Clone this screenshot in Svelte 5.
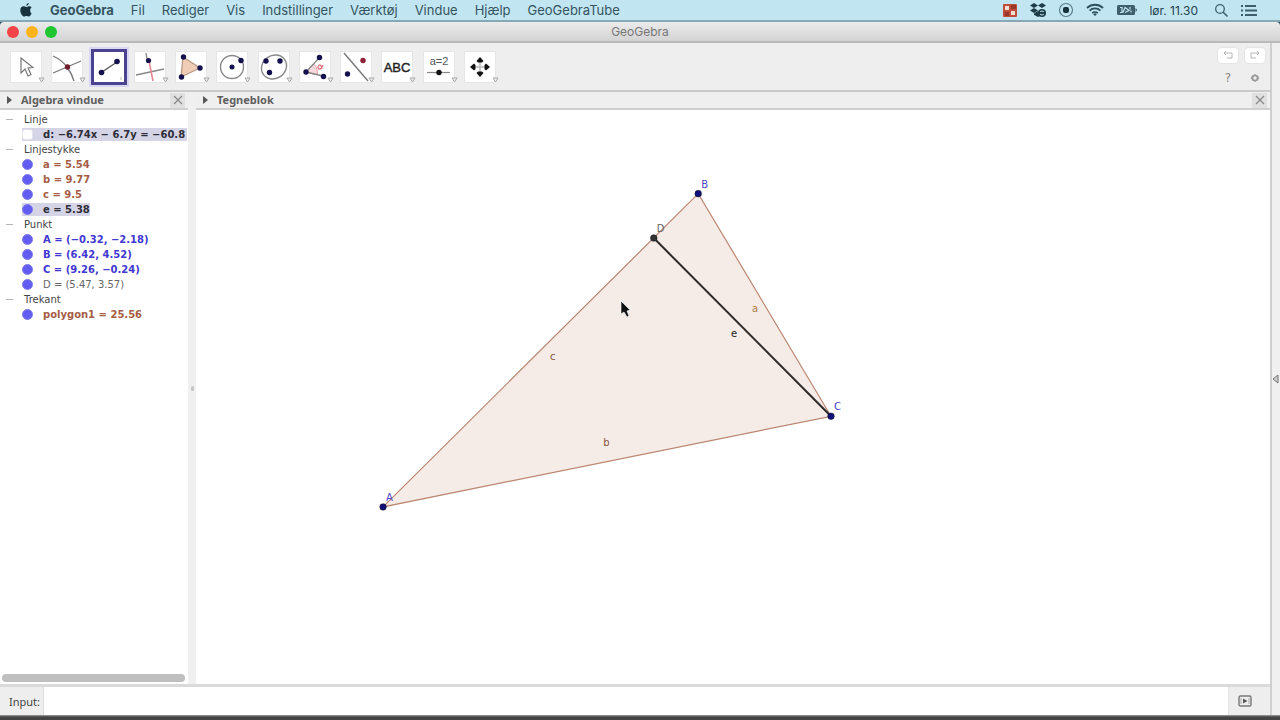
<script lang="ts">
  type Point = { name: string; x: number; y: number; color: string; fill: string };

  const menus = ['Fil', 'Rediger', 'Vis', 'Indstillinger', 'Værktøj', 'Vindue', 'Hjælp', 'GeoGebraTube'];

  const tools = [
    { id: 'move', label: 'Flyt' },
    { id: 'intersect', label: 'Skæringspunkt' },
    { id: 'segment', label: 'Linjestykke' },
    { id: 'perpendicular', label: 'Vinkelret linje' },
    { id: 'polygon', label: 'Polygon' },
    { id: 'circle', label: 'Cirkel' },
    { id: 'ellipse', label: 'Ellipse' },
    { id: 'angle', label: 'Vinkel' },
    { id: 'reflect', label: 'Spejling' },
    { id: 'text', label: 'Tekst' },
    { id: 'slider', label: 'Skyder' },
    { id: 'pan', label: 'Flyt tegneblok' }
  ];
  let activeTool = $state('segment');

  let groups = $state([
    {
      name: 'Linje',
      open: true,
      items: [{ text: 'd: −6.74x − 6.7y = −60.8', kind: 'plain', bold: true, selected: true, wide: true, shown: false }]
    },
    {
      name: 'Linjestykke',
      open: true,
      items: [
        { text: 'a = 5.54', kind: 'brown', bold: true, selected: false, wide: false, shown: true },
        { text: 'b = 9.77', kind: 'brown', bold: true, selected: false, wide: false, shown: true },
        { text: 'c = 9.5', kind: 'brown', bold: true, selected: false, wide: false, shown: true },
        { text: 'e = 5.38', kind: 'plain', bold: true, selected: true, wide: false, shown: true }
      ]
    },
    {
      name: 'Punkt',
      open: true,
      items: [
        { text: 'A = (−0.32, −2.18)', kind: 'blue', bold: true, selected: false, wide: false, shown: true },
        { text: 'B = (6.42, 4.52)', kind: 'blue', bold: true, selected: false, wide: false, shown: true },
        { text: 'C = (9.26, −0.24)', kind: 'blue', bold: true, selected: false, wide: false, shown: true },
        { text: 'D = (5.47, 3.57)', kind: 'grey', bold: false, selected: false, wide: false, shown: true }
      ]
    },
    {
      name: 'Trekant',
      open: true,
      items: [{ text: 'polygon1 = 25.56', kind: 'brown', bold: true, selected: false, wide: false, shown: true }]
    }
  ]);

  // View transform: pixels per unit and the origin inside the drawing pad
  const scale = 46.76;
  const origin = { x: 202, y: 295 };
  const px = (x: number) => origin.x + x * scale;
  const py = (y: number) => origin.y - y * scale;

  const A: Point = { name: 'A', x: -0.32, y: -2.18, color: '#4a46cc', fill: '#10107c' };
  const B: Point = { name: 'B', x: 6.42, y: 4.52, color: '#4a46cc', fill: '#10107c' };
  const C: Point = { name: 'C', x: 9.26, y: -0.24, color: '#4a46cc', fill: '#10107c' };
  const D: Point = { name: 'D', x: 5.47, y: 3.57, color: '#666', fill: '#333' };
  const points = [A, B, C, D];

  const edgeLabels = [
    { name: 'a', x: 7.57, y: 1.98, color: '#b07b48' },
    { name: 'b', x: 4.39, y: -0.88, color: '#84563f' },
    { name: 'c', x: 3.25, y: 0.96, color: '#84563f' },
    { name: 'e', x: 7.12, y: 1.46, color: '#222' }
  ];

  const triangle = [A, B, C].map((p) => `${px(p.x)},${py(p.y)}`).join(' ');

  let command = $state('');
</script>

<div class="screen">
  <nav class="menubar" aria-label="Menu">
    <button class="apple" aria-label="Apple">
      <svg width="14" height="16" viewBox="0 0 14 16">
        <path d="M9.8 1c.1 1.3-1 2.7-2.500 2.700C7.100 2.400 8.400 1.100 9.800 1zM12.600 11.300c-.7 1.700-1.600 3.200-2.800 3.200-.9 0-1.200-.5-2.300-.5s-1.500.5-2.300.5C3.300 14.500 1.300 11.200 1.300 8.200c0-2.500 1.600-3.900 3.200-3.900 1.100 0 1.900.7 2.800.7.800 0 1.700-.8 3.100-.8.900 0 1.700.5 2.200 1.200-2 1.200-1.700 4.800 0 5.900z" fill="#17323c" />
      </svg>
    </button>
    <button class="app-name">GeoGebra</button>
    {#each menus as menu}
      <button>{menu}</button>
    {/each}

    <div class="status">
      <svg width="16" height="16" viewBox="0 0 16 16">
        <rect x="1" y="2" width="14" height="13" rx="1" fill="#c04d37" />
        <path d="M3 4h4v4H3zM9 9h4v4H9z" fill="#f6ddd6" />
        <path d="M9 3h5v4H9zM3 10h4v4H3z" fill="#96382a" />
      </svg>
      <svg width="18" height="16" viewBox="0 0 18 16">
        <path d="M5 1l4 2.500-4 2.500-4-2.500zM13 1l4 2.500-4 2.500-4-2.500zM5 6l4 2.500L5 11 1 8.500zM5 11.500l4-2.500 2 1v4l-2 1-4-2.200z" fill="#1d3c47" />
        <circle cx="13" cy="11" r="4" fill="#1d3c47" />
        <path d="M11 10a2.500 2.500 0 0 1 4 0M15 12a2.500 2.500 0 0 1-4 0" stroke="#c1e6f2" fill="none" />
      </svg>
      <svg width="16" height="16" viewBox="0 0 16 16">
        <circle cx="8" cy="8" r="6.500" fill="none" stroke="#5b7c88" stroke-width="1.200" />
        <rect x="5" y="5" width="6" height="6" rx="2" fill="#17323c" />
      </svg>
      <svg width="20" height="16" viewBox="0 0 20 16">
        <path d="M2 6a11.500 11.500 0 0 1 16 0M4.600 8.600a7.800 7.800 0 0 1 10.800 0M7.200 11.200a4 4 0 0 1 5.600 0" fill="none" stroke="#2e4f5b" stroke-width="1.800" />
        <path d="M8.200 12.200a2.500 2.500 0 0 1 3.600 0L10 14z" fill="#2e4f5b" />
      </svg>
      <svg width="22" height="16" viewBox="0 0 22 16">
        <rect x="1" y="3" width="18" height="10" rx="1.500" fill="#3d5e6a" />
        <path d="M19.500 6q3 2 0 4z" fill="#3d5e6a" />
        <path d="M4 5.500h2v5H4M7 10.500l2-5 4 3-4 2M14 5v2.500M15 8.500v2" stroke="#c1e6f2" fill="none" stroke-width="1.200" />
      </svg>
      <span class="clock">lør. 11.30</span>
      <button aria-label="Søg">
        <svg width="16" height="16" viewBox="0 0 16 16">
          <circle cx="7" cy="7" r="4.300" fill="none" stroke="#3d5e6a" stroke-width="1.300" />
          <path d="M10.200 10.200L14.500 14.500" stroke="#3d5e6a" stroke-width="1.600" />
        </svg>
      </button>
      <button aria-label="Notifikationer">
        <svg width="18" height="16" viewBox="0 0 18 16">
          <path d="M1 4h2M1 8.500h2M1 13h2M5 4h11M5 8.500h12M5 13h12" stroke="#3d5e6a" stroke-width="1.800" />
        </svg>
      </button>
    </div>
  </nav>

  <div class="title-back">
    <header class="titlebar">
      <div class="lights">
        <button class="light red" aria-label="Luk"></button>
        <button class="light yellow" aria-label="Minimer"></button>
        <button class="light green" aria-label="Zoom"></button>
      </div>
      <h1>GeoGebra</h1>
    </header>
  </div>

  <div class="window">
    <div class="main">
      <div class="toolbar">
        <div class="tools">
          {#each tools as tool}
            <button
              class="tool"
              class:active={activeTool === tool.id}
              aria-label={tool.label}
              onclick={() => (activeTool = tool.id)}
            >
              <svg width="30" height="30" viewBox="0 0 30 30">
                {#if tool.id === 'move'}
                  <path d="M10 6v15l4-4 3 7 3-1.500-3-6.500 5-.5z" fill="#fff" stroke="#777" stroke-width="1.200" />
                {:else if tool.id === 'intersect'}
                  <path d="M1 4q9 4 14 11t7 14M1 21L29 9" stroke="#777" stroke-width="1.300" fill="none" />
                  <circle cx="15.500" cy="15" r="2.700" fill="#701c2a" />
                {:else if tool.id === 'segment'}
                  <path d="M8 20L23 10" stroke="#555" stroke-width="1.300" />
                  <circle cx="7.500" cy="20.500" r="2.800" fill="#15104e" />
                  <circle cx="23" cy="9.500" r="2.800" fill="#15104e" />
                  <path d="M27 25v3" stroke="#bbb" />
                {:else if tool.id === 'perpendicular'}
                  <path d="M1 23L29 17" stroke="#888" stroke-width="1.300" />
                  <path d="M11 1l1 6" stroke="#888" stroke-width="1.300" />
                  <path d="M14 9l4 20" stroke="#e48795" stroke-width="1.600" />
                  <circle cx="13.500" cy="8.500" r="2.600" fill="#15104e" />
                {:else if tool.id === 'polygon'}
                  <path d="M7 5l17 11L5 25z" fill="#f0cdb6" stroke="#b99a86" stroke-width="1.300" />
                  <circle cx="7.500" cy="5" r="2.700" fill="#15104e" />
                  <circle cx="24" cy="16" r="2.700" fill="#15104e" />
                  <circle cx="5.500" cy="25" r="2.700" fill="#15104e" />
                {:else if tool.id === 'circle'}
                  <circle cx="15" cy="15" r="11.500" fill="none" stroke="#888" stroke-width="1.400" />
                  <circle cx="15" cy="15" r="2.500" fill="#15104e" />
                  <circle cx="24" cy="8.500" r="2.700" fill="#15104e" />
                {:else if tool.id === 'ellipse'}
                  <ellipse cx="15" cy="15" rx="13" ry="11.500" transform="rotate(-35 15 15)" fill="none" stroke="#888" stroke-width="1.400" />
                  <circle cx="7" cy="9" r="2.700" fill="#15104e" />
                  <circle cx="21" cy="9" r="2.700" fill="#15104e" />
                  <circle cx="10.500" cy="20.500" r="2.700" fill="#15104e" />
                {:else if tool.id === 'angle'}
                  <path d="M6 20l7.500-8a11 11 0 0 1 3.500 11z" fill="#fbdadd" stroke="#e79aa3" />
                  <path d="M6 20L20 5M6 20l19 4.500" stroke="#888" stroke-width="1.300" />
                  <path d="M23 13q-2 5-4 4t0-4q2-1 3 4" stroke="#e0747e" stroke-width="1.300" fill="none" />
                  <circle cx="6" cy="20" r="2.700" fill="#15104e" />
                  <circle cx="19.500" cy="5.500" r="2.700" fill="#15104e" />
                  <circle cx="23.500" cy="24.500" r="2.700" fill="#15104e" />
                {:else if tool.id === 'reflect'}
                  <path d="M3 1l24 28" stroke="#777" stroke-width="1.400" />
                  <circle cx="22" cy="8.500" r="2.700" fill="#8f1f35" />
                  <circle cx="6.500" cy="22" r="2.700" fill="#15104e" />
                {:else if tool.id === 'text'}
                  <text x="15" y="20" text-anchor="middle" font-size="13" fill="#222" stroke="#222" stroke-width="0.400">ABC</text>
                {:else if tool.id === 'slider'}
                  <text x="15" y="13" text-anchor="middle" font-size="11" fill="#555">a=2</text>
                  <path d="M3 20.500h23" stroke="#888" stroke-width="1.200" />
                  <circle cx="15" cy="20.500" r="2.700" fill="#111" />
                {:else}
                  <path d="M15 9v12M9 15h12" stroke="#bbb" stroke-width="1.500" />
                  <path d="M15 5l3.500 4-1.500 1.500h-4L11.500 9zM15 25l3.500-4-1.500-1.500h-4L11.500 21zM5 15l4-3.500 1.500 1.500v4L9 18.500zM25 15l-4-3.500-1.500 1.500v4l1.500 1.500z" fill="#111" />
                {/if}
              </svg>
              {#if tool.id !== activeTool}
                <svg class="more" width="7" height="6" viewBox="0 0 7 6">
                  <path d="M1 1h5L3.500 5z" fill="#eee" stroke="#a8a8a8" />
                </svg>
              {/if}
            </button>
          {/each}
        </div>

        <div class="quick">
          <button class="pill" aria-label="Fortryd">
            <svg width="12" height="10" viewBox="0 0 12 10">
              <path d="M4 1L2 3l2 2M2 3h8v5H5" fill="none" stroke="#b5b5b5" />
            </svg>
          </button>
          <button class="pill" aria-label="Gentag">
            <svg width="12" height="10" viewBox="0 0 12 10">
              <path d="M8 1l2 2-2 2M10 3H2v5h5" fill="none" stroke="#b5b5b5" />
            </svg>
          </button>
          <button class="help">?</button>
          <button class="help" aria-label="Indstillinger">
            <svg width="12" height="12" viewBox="0 0 12 12">
              <path d="M6 2l1.500 1 1.500.5.500 1.500 1 1-1 1-.5 1.500L7.500 9 6 10 4.500 9 3 8.500 2.500 7l-1-1 1-1L3 3.500 4.500 3z" fill="#999" />
              <circle cx="6" cy="6" r="1.700" fill="#eee" />
            </svg>
          </button>
        </div>
      </div>

      <div class="views">
        <section class="algebra">
          <div class="view-header">
            <button class="expand" aria-label="Vis stilbjælke"><svg width="5" height="8" viewBox="0 0 5 8"><path d="M0 0l5 4-5 4z" fill="#555" /></svg></button>
            <h2>Algebra vindue</h2>
            <button class="close" aria-label="Luk algebra vindue"><svg width="10" height="10" viewBox="0 0 10 10"><path d="M1 1l8 8M9 1L1 9" stroke="#888" stroke-width="1.200" /></svg></button>
          </div>
          <div class="tree">
            {#each groups as group}
              <div class="group">
                <button class="fold" aria-label="Fold {group.name}" onclick={() => (group.open = !group.open)}></button>
                <span>{group.name}</span>
              </div>
              {#if group.open}
                {#each group.items as item}
                  <div class="item {item.kind}" class:bold={item.bold} class:selected={item.selected} class:wide={item.wide}>
                    <input type="checkbox" bind:checked={item.shown} aria-label="Vis {item.text}" />
                    <span>{item.text}</span>
                  </div>
                {/each}
              {/if}
            {/each}
          </div>
          <div class="scrollbar"></div>
        </section>

        <div class="divider"><span></span></div>

        <section class="pad">
          <div class="view-header">
            <button class="expand" aria-label="Vis stilbjælke"><svg width="5" height="8" viewBox="0 0 5 8"><path d="M0 0l5 4-5 4z" fill="#555" /></svg></button>
            <h2>Tegneblok</h2>
            <button class="close" aria-label="Luk tegneblok"><svg width="10" height="10" viewBox="0 0 10 10"><path d="M1 1l8 8M9 1L1 9" stroke="#888" stroke-width="1.200" /></svg></button>
          </div>
          <svg class="canvas">
            <polygon points={triangle} fill="#f5ebe7" stroke="#bb8670" stroke-width="1.200" />
            <line x1={px(D.x)} y1={py(D.y)} x2={px(C.x)} y2={py(C.y)} stroke="#2d2927" stroke-width="2" />
            {#each edgeLabels as label}
              <text x={px(label.x)} y={py(label.y)} fill={label.color}>{label.name}</text>
            {/each}
            {#each points as point}
              <circle cx={px(point.x)} cy={py(point.y)} r="3.300" fill={point.fill} stroke="#111" stroke-width="0.500" />
              <text x={px(point.x) + 3} y={py(point.y) - 6} fill={point.color}>{point.name}</text>
            {/each}
            <!-- mouse pointer -->
            <path d="M425 191v13l3-2 3 5 2-1-2-5 3-1z" fill="#111" stroke="#fff" stroke-width="0.600" />
          </svg>
        </section>
      </div>

      <form class="input-bar" onsubmit={(e) => e.preventDefault()}>
        <label for="command">Input:</label>
        <input id="command" type="text" autocomplete="off" bind:value={command} />
        <button aria-label="Hjælp til input">
          <svg width="14" height="12" viewBox="0 0 14 12">
            <rect x="1" y="1" width="12" height="10" rx="1.500" fill="#eee" stroke="#777" stroke-width="1.400" />
            <path d="M5 3.500v5L9.500 6z" fill="#555" />
            <path d="M3 3v6M11 3v6" stroke="#aaa" />
          </svg>
        </button>
      </form>
    </div>

    <aside class="side">
      <button aria-label="Vis sidepanel">
        <svg width="8" height="10" viewBox="0 0 8 10"><path d="M6 1v8L1 5z" fill="#ccc" stroke="#777" /></svg>
      </button>
    </aside>
  </div>
  <div class="desktop"></div>
</div>

<style>
  :global(body) {
    margin: 0;
  }

  .screen {
    min-height: 100vh;
    display: flex;
    flex-direction: column;
    background: #eee;
    font-family: 'DejaVu Sans', Verdana, sans-serif;
    font-size: 10px;
    color: #333;
  }

  button {
    margin: 0;
    padding: 0;
    border: none;
    background: none;
    font: inherit;
    color: inherit;
  }

  svg {
    display: block;
  }

  h1,
  h2 {
    margin: 0;
  }

  /* macOS menu bar */
  .menubar {
    display: flex;
    align-items: center;
    gap: 17px;
    height: 20px;
    padding: 0 22px 0 19px;
    background: #c1e6f2;
    border-bottom: 2px solid #86a9b5;
    font-family: Inter, Roboto, sans-serif;
    font-size: 13px;
    color: #36545f;
  }

  .app-name {
    font-weight: 700;
  }

  .status {
    display: flex;
    align-items: center;
    gap: 11px;
    margin-left: auto;
  }

  .clock {
    padding-right: 4px;
    font-size: 12px;
    color: #24424d;
  }

  .title-back {
    background: #24505c;
  }

  .titlebar {
    display: grid;
    grid-template-columns: 1fr auto 1fr;
    align-items: center;
    height: 19px;
    padding: 0 7px;
    border-radius: 4px 4px 0 0;
    border-bottom: 2px solid #b9b9b9;
    background: linear-gradient(#ebebeb, #d3d3d3);
  }

  .titlebar h1 {
    font-family: Inter, Roboto, sans-serif;
    font-size: 12px;
    font-weight: 400;
    color: #777;
  }

  .lights {
    display: flex;
    gap: 7px;
  }

  .light {
    width: 12px;
    height: 12px;
    border-radius: 50%;
  }

  .red {
    background: #f24447;
  }

  .yellow {
    background: #fbb31c;
  }

  .green {
    background: #1fc62f;
  }

  .window {
    flex: 1;
    display: flex;
  }

  .main {
    flex: 1;
    min-width: 0;
    display: flex;
    flex-direction: column;
  }

  .toolbar {
    display: flex;
    justify-content: space-between;
    align-items: center;
    height: 47px;
    padding: 0 4px 0 11px;
    border-bottom: 2px solid #cacaca;
  }

  .tools {
    display: flex;
    justify-content: space-between;
    width: 484px;
    font-family: 'Liberation Sans', Arial, sans-serif;
  }

  .tool {
    position: relative;
    width: 30px;
    height: 30px;
    background: #fff;
    outline: 1px solid #e6e6e6;
  }

  .tool.active {
    outline: 3px solid #4b438f;
    box-shadow: 0 0 0 5px #d9d7f3;
  }

  .more {
    position: absolute;
    right: -4px;
    bottom: -1px;
  }

  .quick {
    display: grid;
    grid-template-columns: 22px 22px;
    gap: 7px 5px;
    justify-items: center;
    align-items: center;
  }

  .pill {
    display: flex;
    justify-content: center;
    align-items: center;
    width: 20px;
    height: 15px;
    border-radius: 4px;
    background: #fff;
    box-shadow: 0 0 1px 1px #e4e4e4;
  }

  .help {
    font-size: 12px;
    line-height: 16px;
    color: #888;
  }

  .views {
    flex: 1;
    display: flex;
  }

  .algebra,
  .pad {
    display: flex;
    flex-direction: column;
    background: #fff;
  }

  .algebra {
    width: 188px;
    overflow: hidden;
  }

  .pad {
    flex: 1;
    min-width: 0;
  }

  .view-header {
    display: flex;
    align-items: center;
    height: 16px;
    padding: 0 3px 0 7px;
    background: #efefef;
    border-bottom: 2px solid #cfcfcf;
  }

  .view-header h2 {
    margin-left: 9px;
    font-size: 11px;
    font-family: 'Noto Sans', 'DejaVu Sans', sans-serif;
    font-weight: 700;
    line-height: 16px;
    color: #606060;
  }

  .close {
    display: flex;
    justify-content: center;
    align-items: center;
    width: 15px;
    height: 15px;
    margin-left: auto;
    background: #e0e0e0;
  }

  .tree {
    flex: 1;
    padding-top: 2px;
    line-height: 15px;
    white-space: nowrap;
  }

  .group {
    display: flex;
    align-items: center;
    gap: 11px;
    padding-left: 6px;
    height: 15px;
    color: #444;
  }

  .fold {
    width: 7px;
    height: 1px;
    background: #b5b5b5;
  }

  .item {
    display: flex;
    align-items: center;
    gap: 10px;
    width: max-content;
    height: 15px;
    margin-left: 22px;
  }

  .item.bold {
    font-weight: 700;
  }

  .item.selected {
    background: linear-gradient(#fff 1px, #d5d4e6 1px, #d5d4e6 14px, #fff 14px);
  }

  .item.wide {
    width: 165px;
    overflow: hidden;
  }

  .item input {
    appearance: none;
    flex: none;
    width: 11px;
    height: 11px;
    margin: 0;
    border: 1px solid #e3e3ee;
    border-radius: 3px;
    background: #fff;
  }

  .item input:checked {
    border-color: #7f7bea;
    border-radius: 50%;
    background: #625df0;
  }

  .plain {
    color: #2e2e38;
  }

  .brown {
    color: #a65d46;
  }

  .blue {
    color: #4238d2;
  }

  .grey {
    color: #666;
  }

  .scrollbar {
    height: 8px;
    margin: 0 3px 2px 2px;
    border-radius: 4px;
    background: #bfbfbf;
  }

  .divider {
    display: flex;
    align-items: center;
    justify-content: center;
    width: 8px;
    background: #f0f0f0;
  }

  .divider span {
    width: 3px;
    height: 5px;
    border-radius: 2px;
    background: #c4c4c4;
  }

  .canvas {
    flex: 1;
    width: 100%;
    font-size: 10px;
  }

  .input-bar {
    display: flex;
    align-items: center;
    height: 28px;
    border-top: 3px solid #dadada;
    font-family: 'Noto Sans', 'DejaVu Sans', sans-serif;
    font-size: 11px;
  }

  .input-bar label {
    width: 34px;
    padding-left: 9px;
    color: #444;
  }

  .input-bar input {
    flex: 1;
    align-self: stretch;
    min-width: 0;
    padding: 0 4px;
    border: none;
    border-left: 1px solid #ddd;
    border-right: 1px solid #e4e4e4;
    background: #fff;
    font: inherit;
    outline: none;
  }

  .input-bar button {
    padding: 0 18px 0 9px;
  }

  .side {
    display: flex;
    align-items: center;
    width: 8px;
    border-left: 2px solid #cfcfcf;
    background: #f0f0f0;
  }

  .desktop {
    height: 5px;
    background: linear-gradient(#a0a0a0, #444 2px);
  }
</style>
